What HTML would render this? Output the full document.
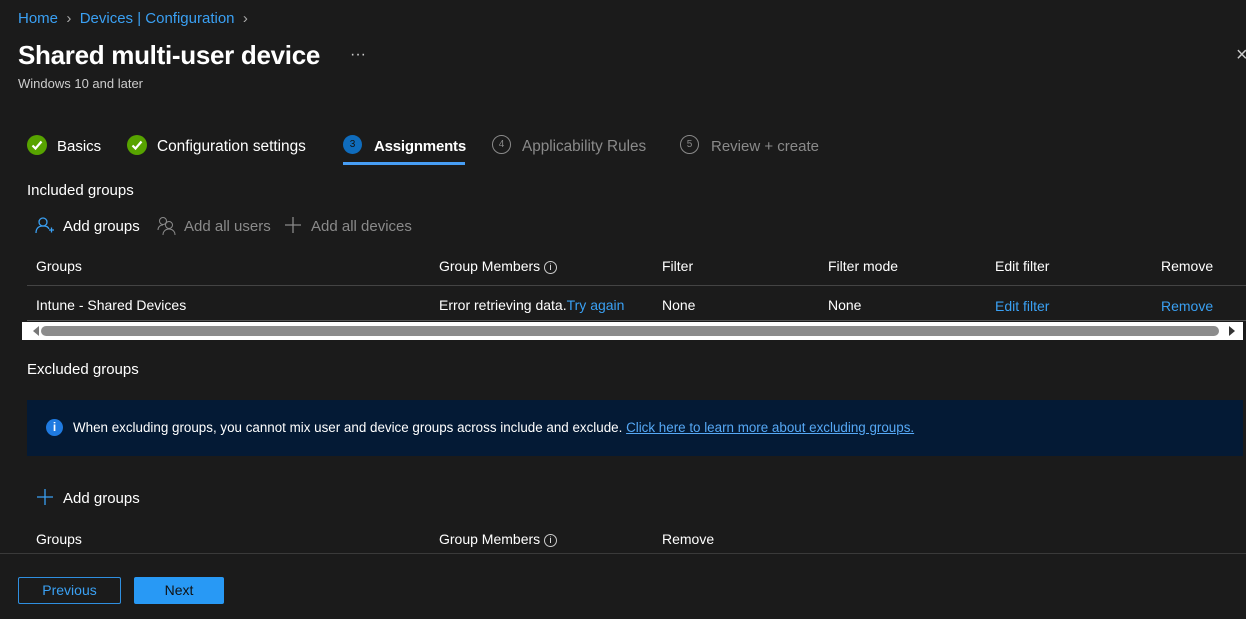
<!DOCTYPE html>
<html><head><style>
body{margin:0;width:1246px;height:619px;background:#1b1b1b;font-family:"Liberation Sans",sans-serif;color:#fff;position:relative;overflow:hidden;font-size:14px}
.a{position:absolute;white-space:nowrap}
.blue{color:#3aa0f3}
.grey{color:#8a8a8a}
.chk{position:absolute;width:20px;height:20px;border-radius:50%;background:#57a300}
.hdr{font-size:14px}
</style></head><body>
<div class="a blue" style="left:18px;top:10px;font-size:15px">Home <span style="color:#aaa">&nbsp;›&nbsp;</span> Devices | Configuration <span style="color:#aaa">&nbsp;›</span></div>
<div class="a" style="left:18px;top:40px;font-size:26px;font-weight:bold;letter-spacing:-0.3px">Shared multi-user device</div>
<div class="a" style="left:350px;top:46px;font-size:16px;color:#ccc">···</div>
<div class="a" style="left:1236px;top:44px;font-size:20px;color:#ccc">×</div>
<div class="a" style="left:18px;top:76px;font-size:13px;color:#ccc">Windows 10 and later</div>

<div class="chk" style="left:27px;top:135px"><svg width="20" height="20"><path d="M5.5 10.5l3 3 6-7" stroke="#fff" stroke-width="2.2" fill="none"/></svg></div>
<div class="a" style="left:57px;top:138px;font-size:15px">Basics</div>
<div class="chk" style="left:127px;top:135px"><svg width="20" height="20"><path d="M5.5 10.5l3 3 6-7" stroke="#fff" stroke-width="2.2" fill="none"/></svg></div>
<div class="a" style="left:157px;top:138px;font-size:15.4px">Configuration settings</div>
<div class="a" style="left:343px;top:135px;width:19px;height:19px;border-radius:50%;background:#0f6cbd;color:#111;font-size:10px;text-align:center;line-height:19px">3</div>
<div class="a" style="left:374px;top:138px;font-size:15px;font-weight:bold;letter-spacing:-0.2px">Assignments</div>
<div class="a" style="left:343px;top:162px;width:122px;height:3px;background:#479ef5"></div>
<div class="a grey" style="left:492px;top:135px;width:17px;height:17px;border:1px solid #8a8a8a;border-radius:50%;font-size:10px;text-align:center;line-height:17px">4</div>
<div class="a grey" style="left:522px;top:138px;font-size:15.3px">Applicability Rules</div>
<div class="a grey" style="left:680px;top:135px;width:17px;height:17px;border:1px solid #8a8a8a;border-radius:50%;font-size:10px;text-align:center;line-height:17px">5</div>
<div class="a grey" style="left:711px;top:138px;font-size:15px">Review + create</div>

<div class="a" style="left:27px;top:182px;font-size:15px">Included groups</div>
<svg class="a" style="left:35px;top:216px" width="20" height="20"><circle cx="8" cy="6" r="4" stroke="#3aa0f3" fill="none" stroke-width="1.3"/><path d="M1 17c0-5 3-7 7-7s5 1 6 3M14 14h5M16.5 11.5v5" stroke="#3aa0f3" fill="none" stroke-width="1.3"/></svg>
<div class="a" style="left:63px;top:218px;font-size:15px">Add groups</div>
<svg class="a" style="left:157px;top:216px" width="20" height="20"><circle cx="6" cy="5" r="3.5" stroke="#8a8a8a" fill="none"/><circle cx="12" cy="9" r="3.5" stroke="#8a8a8a" fill="none"/><path d="M1 14c0-3 2-5 5-5M6 19c0-4 3-6 6-6s6 2 6 6" stroke="#8a8a8a" fill="none"/></svg>
<div class="a grey" style="left:184px;top:218px;font-size:15px">Add all users</div>
<svg class="a" style="left:284px;top:216px" width="18" height="18"><path d="M9 1v16M1 9h16" stroke="#8a8a8a" stroke-width="1.3"/></svg>
<div class="a grey" style="left:311px;top:218px;font-size:15px">Add all devices</div>

<div class="a hdr" style="left:36px;top:258px">Groups</div>
<div class="a hdr" style="left:439px;top:258px">Group Members <span style="display:inline-block;width:11px;height:11px;border:1px solid #ccc;border-radius:50%;font-size:9px;text-align:center;line-height:11px;vertical-align:1px">i</span></div>
<div class="a hdr" style="left:662px;top:258px">Filter</div>
<div class="a hdr" style="left:828px;top:258px">Filter mode</div>
<div class="a hdr" style="left:995px;top:258px">Edit filter</div>
<div class="a hdr" style="left:1161px;top:258px">Remove</div>
<div class="a" style="left:27px;top:285px;width:1219px;height:1px;background:#444"></div>
<div class="a" style="left:36px;top:297px">Intune - Shared Devices</div>
<div class="a" style="left:439px;top:297px">Error retrieving data.<span class="blue">Try again</span></div>
<div class="a" style="left:662px;top:297px">None</div>
<div class="a" style="left:828px;top:297px">None</div>
<div class="a blue" style="left:995px;top:298px">Edit filter</div>
<div class="a blue" style="left:1161px;top:298px">Remove</div>
<div class="a" style="left:27px;top:320px;width:1219px;height:1px;background:#555"></div>
<div class="a" style="left:22px;top:322px;width:1221px;height:18px;background:#fff"></div>
<div class="a" style="left:33px;top:326px;width:0;height:0;border-top:5px solid transparent;border-bottom:5px solid transparent;border-right:6px solid #777"></div>
<div class="a" style="left:41px;top:326px;width:1178px;height:10px;border-radius:5px;background:#8c8c8c"></div>
<div class="a" style="left:1229px;top:326px;width:0;height:0;border-top:5px solid transparent;border-bottom:5px solid transparent;border-left:6px solid #333"></div>

<div class="a" style="left:27px;top:361px;font-size:15px">Excluded groups</div>
<div class="a" style="left:27px;top:400px;width:1216px;height:56px;background:#041a35"></div>
<div class="a" style="left:46px;top:419px;width:17px;height:17px;border-radius:50%;background:#1f7ae0;color:#fff;font-size:12px;font-weight:bold;text-align:center;line-height:17px">i</div>
<div class="a" style="left:73px;top:420px;font-size:13.4px">When excluding groups, you cannot mix user and device groups across include and exclude. <span class="blue" style="text-decoration:underline;color:#56a8f5">Click here to learn more about excluding groups.</span></div>

<svg class="a" style="left:36px;top:488px" width="18" height="18"><path d="M9 1v16M1 9h16" stroke="#3aa0f3" stroke-width="1.3"/></svg>
<div class="a" style="left:63px;top:490px;font-size:15px">Add groups</div>
<div class="a hdr" style="left:36px;top:531px">Groups</div>
<div class="a hdr" style="left:439px;top:531px">Group Members <span style="display:inline-block;width:11px;height:11px;border:1px solid #ccc;border-radius:50%;font-size:9px;text-align:center;line-height:11px;vertical-align:1px">i</span></div>
<div class="a hdr" style="left:662px;top:531px">Remove</div>
<div class="a" style="left:0;top:553px;width:1246px;height:1px;background:#3a3a3a"></div>

<div class="a" style="left:18px;top:577px;width:101px;height:25px;border:1px solid #2f8fe0;border-radius:2px;color:#3aa0f3;text-align:center;line-height:25px">Previous</div>
<div class="a" style="left:134px;top:577px;width:90px;height:27px;background:#2899f5;border-radius:2px;color:#111;text-align:center;line-height:26px">Next</div>
</body></html>
